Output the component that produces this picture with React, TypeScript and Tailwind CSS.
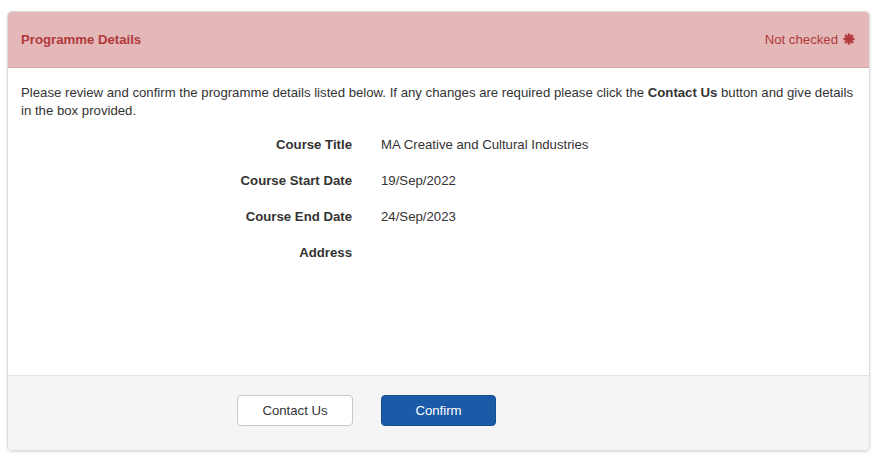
const rows = [
  { label: "Course Title", value: "MA Creative and Cultural Industries" },
  { label: "Course Start Date", value: "19/Sep/2022" },
  { label: "Course End Date", value: "24/Sep/2023" },
  { label: "Address", value: "" },
];

const Asterisk = () => (
  <svg width="12" height="12" viewBox="0 0 12 12" className="ml-[5px]">
    <g stroke="#b4393b" strokeWidth="2.6" strokeLinecap="butt">
      <line x1="6" y1="0.5" x2="6" y2="11.5" />
      <line x1="0.5" y1="6" x2="11.5" y2="6" />
      <line x1="2.1" y1="2.1" x2="9.9" y2="9.9" />
      <line x1="9.9" y1="2.1" x2="2.1" y2="9.9" />
    </g>
  </svg>
);

export default function App() {
  return (
    <div
      className="w-[875px] h-[460px] bg-white pt-[11px] pl-[7px] text-[13.2px] text-[#333]"
      style={{ fontFamily: '"Liberation Sans", Arial, sans-serif' }}
    >
      <div className="w-[863px] rounded-[5px] border border-[#dcdcdc] shadow-[0_1px_3px_rgba(0,0,0,0.15)] overflow-hidden">
        {/* header */}
        <div className="h-[56px] bg-[#e4b8b9] border-b border-[#d9a9aa] flex items-center justify-between pl-[13px] pr-[14px] text-[#b0383a]">
          <span className="font-bold">Programme Details</span>
          <span className="flex items-center">
            Not checked
            <Asterisk />
          </span>
        </div>

        {/* body */}
        <div className="h-[307px] px-[13px] pt-[16px] bg-white">
          <p className="leading-[18px]">
            Please review and confirm the programme details listed below. If any changes are required please click the{" "}
            <b>Contact Us</b> button and give details in the box provided.
          </p>
          <div className="mt-[16px] grid grid-cols-[331px_1fr] gap-x-[29px] gap-y-[18px] leading-[18px]">
            {rows.map((r) => (
              <div key={r.label} className="contents">
                <div className="text-right font-bold">{r.label}</div>
                <div>{r.value || "\u00a0"}</div>
              </div>
            ))}
          </div>
        </div>

        {/* footer */}
        <div className="h-[75px] bg-[#f5f5f5] border-t border-[#e3e3e3] px-[13px] pt-[19px]">
          <div className="grid grid-cols-[332px_1fr] gap-x-[28px]">
            <button className="justify-self-end w-[116px] h-[31px] rounded-[4px] border border-[#c8c8c8] bg-white text-[#333] text-[13.2px]">
              Contact Us
            </button>
            <button className="w-[115px] h-[31px] rounded-[4px] bg-[#1b5aa6] border border-[#174f93] text-white text-[13.2px]">
              Confirm
            </button>
          </div>
        </div>
      </div>
    </div>
  );
}
